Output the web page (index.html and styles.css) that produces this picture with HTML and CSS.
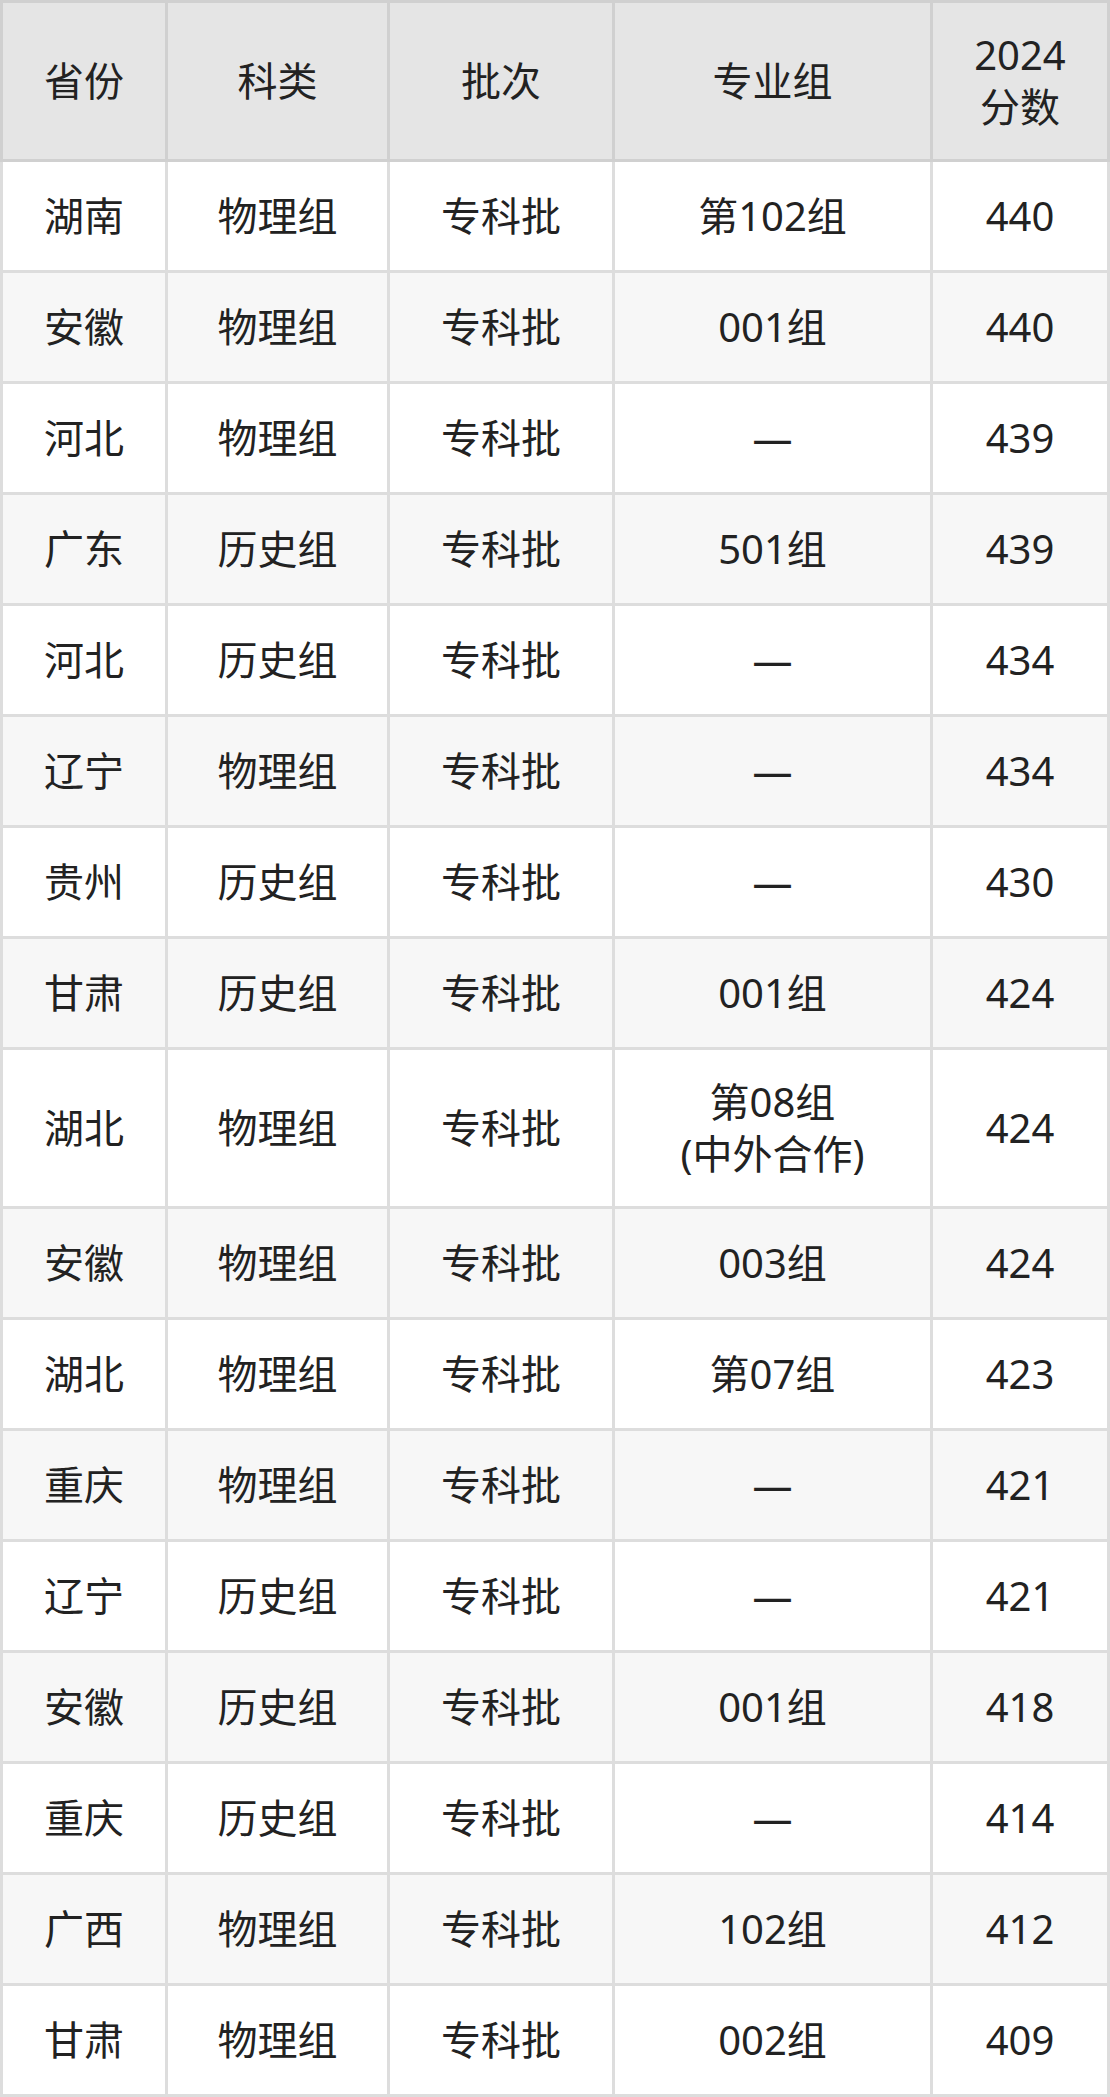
FILE: index.html
```html
<!DOCTYPE html>
<html lang="zh-CN">
<head>
<meta charset="utf-8">
<title>分数表</title>
<link rel="stylesheet" href="styles.css">
</head>
<body>
<div class="table">
  <div class="row head">
    <div class="cell">省份</div><div class="cell">科类</div><div class="cell">批次</div><div class="cell">专业组</div><div class="cell">2024<br>分数</div>
  </div>
  <div class="row"><div class="cell">湖南</div><div class="cell">物理组</div><div class="cell">专科批</div><div class="cell">第102组</div><div class="cell">440</div></div>
  <div class="row alt"><div class="cell">安徽</div><div class="cell">物理组</div><div class="cell">专科批</div><div class="cell">001组</div><div class="cell">440</div></div>
  <div class="row"><div class="cell">河北</div><div class="cell">物理组</div><div class="cell">专科批</div><div class="cell">—</div><div class="cell">439</div></div>
  <div class="row alt"><div class="cell">广东</div><div class="cell">历史组</div><div class="cell">专科批</div><div class="cell">501组</div><div class="cell">439</div></div>
  <div class="row"><div class="cell">河北</div><div class="cell">历史组</div><div class="cell">专科批</div><div class="cell">—</div><div class="cell">434</div></div>
  <div class="row alt"><div class="cell">辽宁</div><div class="cell">物理组</div><div class="cell">专科批</div><div class="cell">—</div><div class="cell">434</div></div>
  <div class="row"><div class="cell">贵州</div><div class="cell">历史组</div><div class="cell">专科批</div><div class="cell">—</div><div class="cell">430</div></div>
  <div class="row alt"><div class="cell">甘肃</div><div class="cell">历史组</div><div class="cell">专科批</div><div class="cell">001组</div><div class="cell">424</div></div>
  <div class="row tall"><div class="cell">湖北</div><div class="cell">物理组</div><div class="cell">专科批</div><div class="cell">第08组<br>(中外合作)</div><div class="cell">424</div></div>
  <div class="row alt"><div class="cell">安徽</div><div class="cell">物理组</div><div class="cell">专科批</div><div class="cell">003组</div><div class="cell">424</div></div>
  <div class="row"><div class="cell">湖北</div><div class="cell">物理组</div><div class="cell">专科批</div><div class="cell">第07组</div><div class="cell">423</div></div>
  <div class="row alt"><div class="cell">重庆</div><div class="cell">物理组</div><div class="cell">专科批</div><div class="cell">—</div><div class="cell">421</div></div>
  <div class="row"><div class="cell">辽宁</div><div class="cell">历史组</div><div class="cell">专科批</div><div class="cell">—</div><div class="cell">421</div></div>
  <div class="row alt"><div class="cell">安徽</div><div class="cell">历史组</div><div class="cell">专科批</div><div class="cell">001组</div><div class="cell">418</div></div>
  <div class="row"><div class="cell">重庆</div><div class="cell">历史组</div><div class="cell">专科批</div><div class="cell">—</div><div class="cell">414</div></div>
  <div class="row alt"><div class="cell">广西</div><div class="cell">物理组</div><div class="cell">专科批</div><div class="cell">102组</div><div class="cell">412</div></div>
  <div class="row"><div class="cell">甘肃</div><div class="cell">物理组</div><div class="cell">专科批</div><div class="cell">002组</div><div class="cell">409</div></div>
</div>
</body>
</html>
```
FILE: styles.css
```css
html, body {
  margin: 0;
  padding: 0;
  background: #ffffff;
}
.table {
  width: 1110px;
  font-family: "Noto Sans", "Noto Sans CJK SC", sans-serif;
  font-size: 40px;
  line-height: 52px;
  color: #222222;
}
.row {
  display: grid;
  grid-template-columns: 165px 222px 225px 318px 180px;
  height: 111px;
  background: #ffffff;
}
.row.alt {
  background: #f7f7f7;
}
.row.tall {
  height: 159px;
}
.row.head {
  height: 162px;
  background: #e5e5e5;
}
.cell {
  box-sizing: border-box;
  display: flex;
  align-items: center;
  justify-content: center;
  text-align: center;
  border-left: 3px solid #dddddd;
  border-bottom: 3px solid #dddddd;
}
.cell:last-child {
  border-right: 3px solid #dddddd;
}
.head .cell {
  border-top: 3px solid #d0d0d0;
  border-left-color: #d0d0d0;
  border-bottom-color: #d0d0d0;
}
.head .cell:last-child {
  border-right-color: #d0d0d0;
}
```
